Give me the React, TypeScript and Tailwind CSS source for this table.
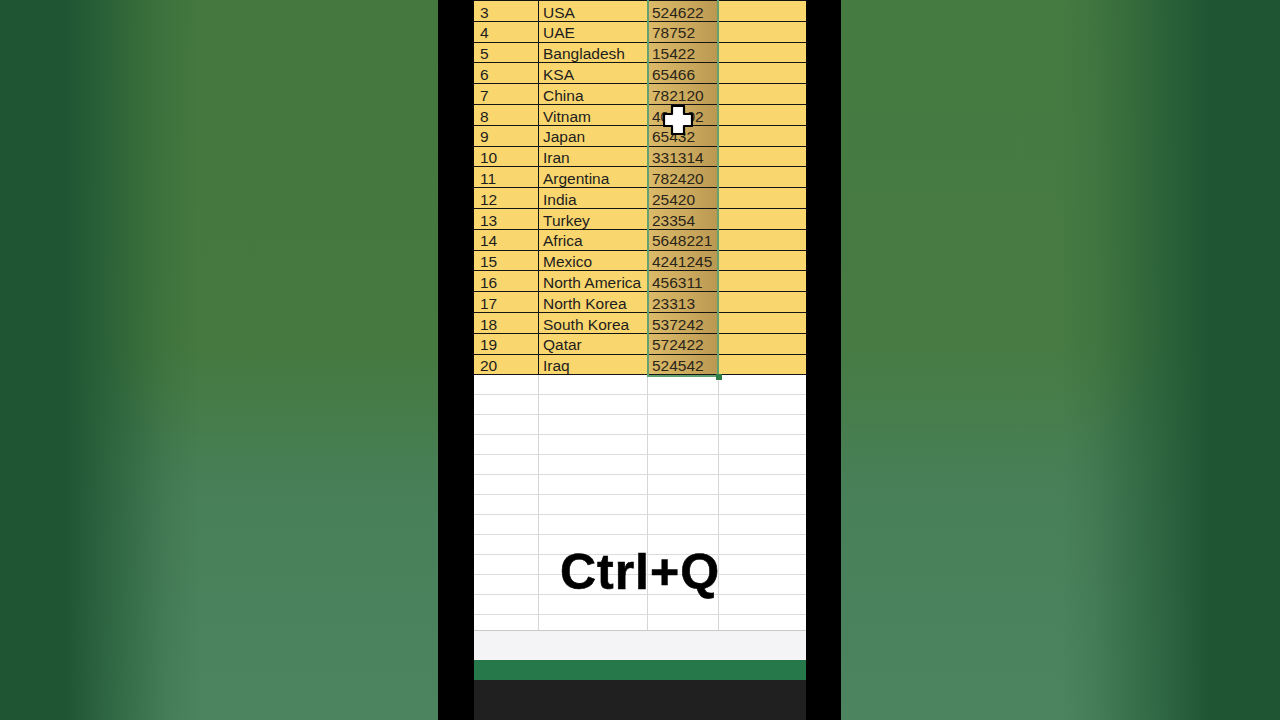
import React from 'react';

const rows = [
  ['3', 'USA', '524622'],
  ['4', 'UAE', '78752'],
  ['5', 'Bangladesh', '15422'],
  ['6', 'KSA', '65466'],
  ['7', 'China', '782120'],
  ['8', 'Vitnam', '406202'],
  ['9', 'Japan', '65432'],
  ['10', 'Iran', '331314'],
  ['11', 'Argentina', '782420'],
  ['12', 'India', '25420'],
  ['13', 'Turkey', '23354'],
  ['14', 'Africa', '5648221'],
  ['15', 'Mexico', '4241245'],
  ['16', 'North America', '456311'],
  ['17', 'North Korea', '23313'],
  ['18', 'South Korea', '537242'],
  ['19', 'Qatar', '572422'],
  ['20', 'Iraq', '524542'],
];

const emptyRows = Array.from({ length: 13 });

export default function App() {
  return (
    <div className="w-[1280px] h-[720px] flex overflow-hidden font-[Liberation_Sans,Arial,sans-serif]">
      {/* blurred backdrop left */}
      <div className="w-[438px] h-full bg-[linear-gradient(to_right,#1f5533_0%,#1f5533_15%,rgba(31,85,51,0.55)_27%,rgba(31,85,51,0.15)_38%,transparent_46%),linear-gradient(to_bottom,#44783f_0%,#45793f_48%,#48805a_70%,#4b845f_100%)]" />

      {/* phone frame */}
      <div className="w-[403px] h-full bg-black pl-[36px] pr-[35px]">
        <div className="relative w-[332px] h-full flex flex-col text-[15.5px] text-[#1d1d1d]">
          {/* filled rows */}
          <div className="border-t border-[#111]">
            {rows.map((r) => (
              <div
                key={r[0]}
                className="grid grid-cols-[65px_109px_71px_87px] h-[20.8px] border-b border-[#151515] bg-[#f9d66e] leading-none"
              >
                <div className="flex items-center pl-[6px] pt-[3px] border-r border-[#151515]">{r[0]}</div>
                <div className="flex items-center pl-[4px] pt-[3px] border-r border-[#151515] whitespace-nowrap">{r[1]}</div>
                <div className="flex items-center pl-[4px] pt-[3px] bg-gradient-to-r from-[#dbba69] via-[#cdab5e] to-[#b99751] text-[#2a2418]">
                  {r[2]}
                </div>
                <div />
              </div>
            ))}
          </div>

          {/* selection outline on column C */}
          <div className="absolute left-[173px] top-0 w-[72px] h-[377px] border-x-2 border-b-2 border-[#63a270]" />
          <div className="absolute left-[242px] top-[374px] w-[6px] h-[6px] bg-[#2f7d46]" />

          {/* empty grid */}
          <div className="h-[255px] overflow-hidden bg-white">
            {emptyRows.map((_, i) => (
              <div
                key={i}
                className="grid grid-cols-[65px_109px_71px_87px] h-[20px] border-b border-[#dcdcdc]"
              >
                <div className="border-r border-[#d6d6d6]" />
                <div className="border-r border-[#d6d6d6]" />
                <div className="border-r border-[#d6d6d6]" />
                <div />
              </div>
            ))}
          </div>

          <div className="h-[30px] bg-[#f4f3f6] border-t border-[#c9c9c9]" />
          <div className="h-[20px] bg-[#26784a]" />
          <div className="flex-1 bg-[#202020]" />

          {/* overlay caption */}
          <div className="absolute left-0 right-0 top-[547px] text-center text-[50px] leading-none font-bold tracking-[1px] text-black [-webkit-text-stroke:0.6px_#000]">
            Ctrl+Q
          </div>

          {/* excel cell cursor */}
          <svg className="absolute left-[189px] top-[105px]" width="30" height="30" viewBox="0 0 30 30">
            <path d="M9 1H21V9H29V21H21V29H9V21H1V9H9Z" fill="#fff" stroke="#000" strokeWidth="2.2" strokeLinejoin="round" />
          </svg>
        </div>
      </div>

      {/* blurred backdrop right */}
      <div className="flex-1 h-full bg-[linear-gradient(to_left,#1f5533_0%,#1f5533_16%,rgba(31,85,51,0.6)_28%,rgba(31,85,51,0.15)_42%,transparent_50%),linear-gradient(to_bottom,#457a41_0%,#477b43_48%,#48805a_70%,#4b845f_100%)]" />
    </div>
  );
}
